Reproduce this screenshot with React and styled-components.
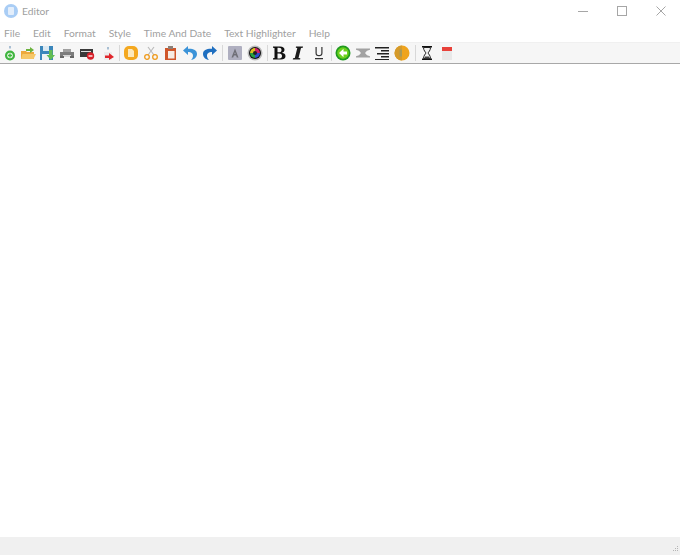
import React from "react";
import styled, { createGlobalStyle } from "styled-components";

const Global = createGlobalStyle`
  html, body { margin: 0; padding: 0; background: #fff; }
  #root { height: 555px; }
`;

const Window = styled.div`
  width: 680px;
  height: 555px;
  display: flex;
  flex-direction: column;
  overflow: hidden;
  background: #fff;
  font-family: Lato, "Open Sans", sans-serif;
`;

const TitleBar = styled.div`
  height: 21px;
  display: flex;
  align-items: center;
  padding-left: 4px;
`;

const AppName = styled.span`
  flex: 1;
  margin-left: 4px;
  font-size: 10.25px;
  color: #a0a0a0;
`;

const WinButton = styled.div`
  width: 39px;
  height: 21px;
  display: flex;
  align-items: center;
  justify-content: center;
  color: #a6a6a6;
`;

const MenuBar = styled.div`
  height: 18px;
  padding: 3px 0 0 4px;
  display: flex;
  align-items: center;
  gap: 13px;
`;

const MenuItem = styled.span`
  font-size: 10.25px;
  color: #a0a0a0;
`;

const ToolBar = styled.div`
  height: 20px;
  display: flex;
  align-items: center;
  background: #f6f6f6;
  border-bottom: 1px solid #a8a8a8;
  border-top: 1px solid #f0f0f0;
`;

const ToolButton = styled.div`
  width: ${(props) => props.$w}px;
  height: 20px;
  flex: none;
  display: flex;
  align-items: center;
  justify-content: center;
`;

const Separator = styled.div`
  width: 1px;
  height: 16px;
  flex: none;
  margin: 0 ${(props) => props.$m}px;
  background: #d8d8d8;
`;

const Editor = styled.div`
  flex: 1;
  background: #fff;
`;

const StatusBar = styled.div`
  height: 18px;
  display: flex;
  justify-content: flex-end;
  align-items: flex-end;
  background: #f0f0f0;
`;

const tools = [
  { w: 20, icon: <><circle cx="8" cy="10.500" r="5" fill="#3fb53f" /><circle cx="8" cy="10.500" r="2.800" fill="#eafbe6" /><path d="M8 8.500v4M6 10.500h4" stroke="#3fb53f" strokeWidth="1.400" /><rect x="7" y="1" width="2" height="2.500" fill="#a9bfd3" /></> },
  { w: 16, icon: <><path d="M1 6h5l1 1h7v7H1z" fill="#eda93c" /><path d="M2.500 9H16l-2.500 5H1z" fill="#f6c768" /><path d="M6 4h4V2l4 3-4 3V6H6z" fill="#6cb33f" /></> },
  { w: 22, icon: <><path d="M1 1h13v14H1z" fill="#3a86bb" /><path d="M4 1h6v5H4z" fill="#dbe9f2" /><path d="M3 9h7v6H3z" fill="#eef3f6" /><path d="M10 5h3.500v5H16l-4.200 5-4.300-5H10z" fill="#62bd52" /></> },
  { w: 18, icon: <><path d="M4 4h8v3H4z" fill="#a0a0a0" /><path d="M1 7h14v4H1z" fill="#7c7c7c" /><path d="M4 10h8v2H4z" fill="#d6d6d6" /><path d="M1 11h4v2H1zM11 11h4v2h-4z" fill="#666" /></> },
  { w: 22, icon: <><path d="M1 4h13v8H1z" fill="#3a3a3a" /><path d="M2 6h10v1H2z" fill="#ddd" /><circle cx="11.500" cy="11" r="3.700" fill="#d8202a" /><path d="M9.500 11h4" stroke="#fff" strokeWidth="1.300" /></> },
  { w: 20, icon: <><path d="M4 7h8v8H4z" fill="#ececec" /><path d="M5 10.500h4V8l5 4-5 3v-2H5z" fill="#e0262c" /><rect x="7" y="2" width="2" height="2.500" fill="#a9bfd3" /></> },
  { sep: 1, m: 1 },
  { w: 20, icon: <><rect x="1" y="1" width="14" height="14" rx="5" fill="#f4a81f" /><path d="M5 4h4l2 2v6H5z" fill="#fce9bd" /></> },
  { w: 20, icon: <><path d="M5 2l6 8M11 2l-6 8" stroke="#b8b8b8" strokeWidth="1.100" /><circle cx="4" cy="12" r="2.300" fill="none" stroke="#ef9a1a" strokeWidth="1.300" /><circle cx="12" cy="12" r="2.300" fill="none" stroke="#ef9a1a" strokeWidth="1.300" /></> },
  { w: 20, icon: <><path d="M2 3h11v12H2z" fill="#d0562a" /><path d="M5 1h5v3H5z" fill="#8c8078" /><path d="M5 6h6.500v7.500H5z" fill="#f7ece4" /></> },
  { w: 18, icon: <path d="M6 1L1 5.500 6 10V7c3 0 5 1 5 4 0 1.500-1 3-2 4 3.500-.5 6-3 6-6 0-4-4-5.500-9-5.200z" fill="#3b93d8" /> },
  { w: 22, icon: <path d="M10 1l5 4.500L10 10V7c-3 0-5 1-5 4 0 1.500 1 3 2 4-3.500-.5-6-3-6-6 0-4 4-5.500 9-5.200z" fill="#1f6fc0" /> },
  { sep: 1, m: 1 },
  { w: 22, icon: <><rect x="1" y="1" width="14" height="14" rx="1" fill="#afafc0" /><path d="M8 3.500L11.500 12.500H9.800L9.100 10.500H6.900L6.200 12.500H4.500zM7.400 9h1.200L8 7z" fill="#6e6e76" /></> },
  { w: 18, icon: <><circle cx="8" cy="8" r="7.500" fill="#bbb" /><circle cx="8" cy="8" r="6" fill="#111" /><path d="M8 3a5 5 0 0 1 5 5H8z" fill="#d0206a" /><path d="M13 8a5 5 0 0 1-5 5V8z" fill="#3050d0" /><path d="M8 13a5 5 0 0 1-5-5h5z" fill="#26a040" /><path d="M3 8a5 5 0 0 1 5-5v5z" fill="#e0c020" /><circle cx="8" cy="8" r="2" fill="#222" /></> },
  { sep: 1, m: 3 },
  { w: 16, icon: <path d="M2 1.500h7c3 0 4.500 1.300 4.500 3.300 0 1.500-1 2.500-2.500 3 2 .3 3.500 1.500 3.500 3.400 0 2.300-2 3.300-4.500 3.300H2v-1.200l1.500-.3V3l-1.500-.3zM6.500 2.800v4.500H8c1.700 0 2.500-.8 2.500-2.300s-.8-2.200-2.500-2.200zM6.500 8.600v5h2c1.700 0 2.500-.9 2.500-2.500s-1-2.500-2.800-2.500z" fill="#111" fillRule="evenodd" /> },
  { w: 22, icon: <path d="M6 1.500h7l-.2 1.200-1.800.3-2.500 10 1.800.3-.2 1.200H2.800l.2-1.200 1.800-.3 2.500-10L5.800 2.700z" fill="#1a1a1a" /> },
  { w: 20, icon: <path d="M4.500 2v6c0 2.300 1.200 3.200 3.500 3.200s3.500-.9 3.500-3.200V2h-1.200v6c0 1.400-.7 2-2.300 2s-2.300-.6-2.300-2V2zM4 13h8v1.200H4z" fill="#333" fillRule="evenodd" /> },
  { sep: 1, m: 2 },
  { w: 18, icon: <><circle cx="8" cy="8" r="7.500" fill="#1f9a1f" /><circle cx="8" cy="8" r="5.800" fill="#6bd01c" /><path d="M8.500 3.800L4 8l4.500 4.200V9.500H12v-3H8.500z" fill="#fff" /></> },
  { w: 22, icon: <path d="M1 3.500h14v1.200l-3 1-2 2.300 2 2.300 3 1v1.200H1v-1.200l3-1L6 8 4 5.700l-3-1z" fill="#a2a2a2" /> },
  { w: 16, icon: <path d="M1 2h14v1.500H1zM7 5h8v1.500H7zM3 8h12v1.500H3zM7 11h8v1.500H7zM1 14h14v1H1z" fill="#222" /> },
  { w: 24, icon: <><circle cx="8" cy="8" r="7.500" fill="#efa41e" /><path d="M8 .5a7.500 7.500 0 0 0 0 15z" fill="#d59a2a" /><path d="M5.500 4.500h2.500v7H5.500z" fill="#a99a58" /></> },
  { sep: 1, m: 1 },
  { w: 20, icon: <><path d="M3 1h10v1.500H3zM3 13.500h10V15H3z" fill="#111" /><path d="M4.500 2.500h7C11.500 5.500 9.500 7 9 8c.5 1 2.500 2.500 2.500 5.500h-7C4.500 10.500 6.500 9 7 8c-.5-1-2.500-2.500-2.500-5.500z" fill="#f2f2f2" stroke="#222" strokeWidth="1" /><path d="M6 11.500h4l.8 2H5.200z" fill="#444" /></> },
  { w: 20, icon: <><path d="M3 3h10v12H3z" fill="#e8e8e8" /><path d="M3 2h10v4H3z" fill="#e8413a" /></> },
];

const menus = ["File", "Edit", "Format", "Style", "Time And Date", "Text Highlighter", "Help"];

export default function App() {
  return (
    <Window>
      <Global />
      <TitleBar>
        <svg width="14" height="14" viewBox="0 0 14 14">
          <circle cx="7" cy="7" r="7" fill="#a9cdf5" />
          <rect x="4" y="3" width="6" height="8" rx="1" fill="#e3eefb" />
        </svg>
        <AppName>Editor</AppName>
        <WinButton>
          <svg width="10" height="10" viewBox="0 0 10 10"><path d="M0 5.500h10" stroke="currentColor" /></svg>
        </WinButton>
        <WinButton>
          <svg width="10" height="10" viewBox="0 0 10 10"><rect x=".5" y=".5" width="9" height="9" fill="none" stroke="currentColor" /></svg>
        </WinButton>
        <WinButton>
          <svg width="10" height="10" viewBox="0 0 10 10"><path d="M.5 .5l9 9M9.500 .5l-9 9" stroke="currentColor" /></svg>
        </WinButton>
      </TitleBar>
      <MenuBar>
        {menus.map((m) => (
          <MenuItem key={m}>{m}</MenuItem>
        ))}
      </MenuBar>
      <ToolBar>
        {tools.map((t, i) =>
          t.sep ? (
            <Separator key={i} $m={t.m} />
          ) : (
            <ToolButton key={i} $w={t.w}>
              <svg width="16" height="16" viewBox="0 0 16 16">{t.icon}</svg>
            </ToolButton>
          )
        )}
      </ToolBar>
      <Editor />
      <StatusBar>
        <svg width="10" height="10" viewBox="0 0 10 10">
          <path d="M7 1h1v1H7zM5 3h1v1H5zM7 3h1v1H7zM3 5h1v1H3zM5 5h1v1H5zM7 5h1v1H7z" fill="#b5b5b5" />
        </svg>
      </StatusBar>
    </Window>
  );
}
